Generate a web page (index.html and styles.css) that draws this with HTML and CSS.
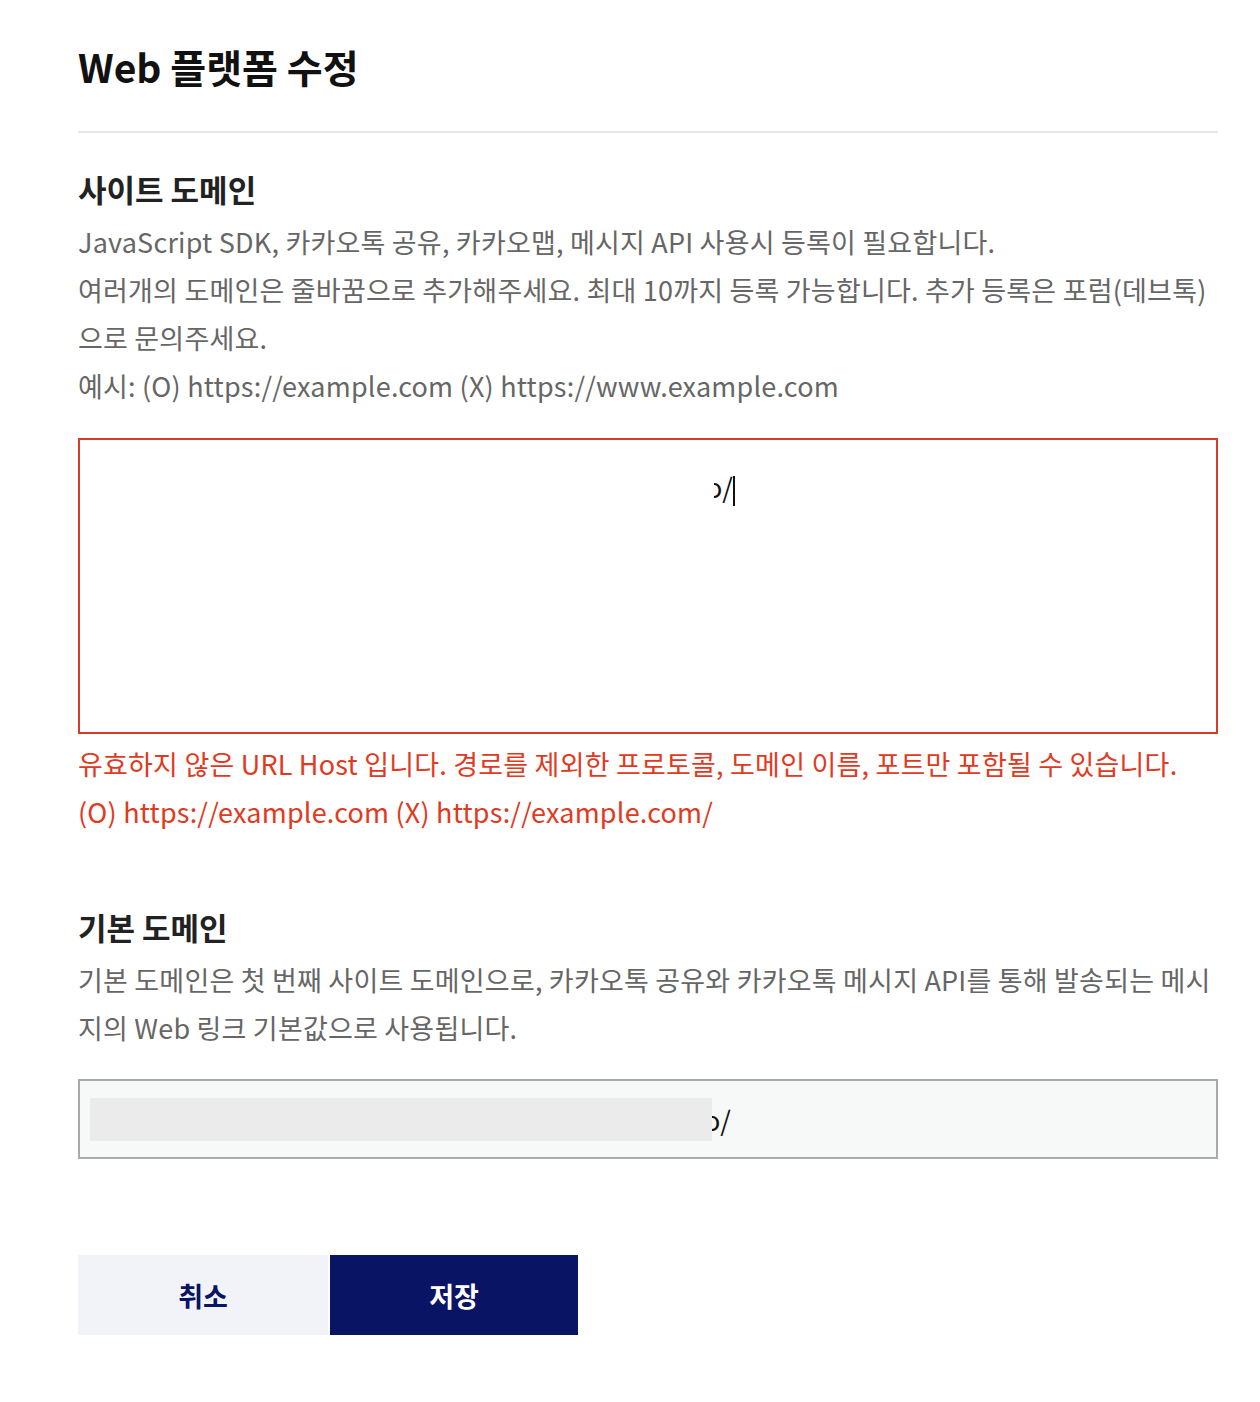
FILE: index.html
```html
<!DOCTYPE html>
<html>
  <head>
    <title>Web 플랫폼 수정</title>
    <link rel="stylesheet" href="styles.css">
  </head>
  <body>
    <div class="container">
      <h1 class="page-title">Web 플랫폼 수정</h1>

      <form id="platformForm">
        <div class="section">
          <h2>사이트 도메인</h2>
          <p class="desc">
            JavaScript SDK, 카카오톡 공유, 카카오맵, 메시지 API 사용시 등록이 필요합니다.<br />
            여러개의 도메인은 줄바꿈으로 추가해주세요. 최대 10까지 등록 가능합니다. 추가 등록은 포럼(데브톡)으로 문의주세요.<br />
            예시: (O) https://example.com (X) https://www.example.com
          </p>
          <div class="domain-box is-error">
            <span class="mask"></span><span class="tail">o/</span><span class="caret"></span>
          </div>
          <p class="error-message">
            유효하지 않은 URL Host 입니다. 경로를 제외한 프로토콜, 도메인 이름, 포트만 포함될 수 있습니다.<br />
            (O) https://example.com (X) https://example.com/
          </p>
        </div>

        <div class="section section-default">
          <h2>기본 도메인</h2>
          <p class="desc">
            기본 도메인은 첫 번째 사이트 도메인으로, 카카오톡 공유와 카카오톡 메시지 API를 통해 발송되는 메시지의 Web 링크 기본값으로 사용됩니다.
          </p>
          <div class="default-input">
            <span class="mask mask-gray"></span><span class="tail">o/</span>
          </div>
        </div>

        <div class="actions">
          <button type="button" class="btn btn-cancel">취소</button>
          <button type="submit" class="btn btn-save">저장</button>
        </div>
      </form>
    </div>
  </body>
</html>
```

FILE: styles.css
```css
body {
  margin: 0;
  font-family: "Noto Sans CJK KR", "Noto Sans", sans-serif;
  color: #222;
  background: #fff;
}
.container {
  width: 1140px;
  padding: 38px 0 60px 78px;
}
.page-title {
  margin: 0;
  font-size: 39px;
  font-weight: 700;
  line-height: 56px;
  color: #111;
  padding-bottom: 37px;
  border-bottom: 2px solid #e6e6e6;
}
.section {
  padding-top: 36px;
}
.section h2 {
  margin: 0;
  font-size: 31px;
  font-weight: 700;
  line-height: 40px;
  color: #222;
}
.desc {
  margin: 9px 0 0;
  font-size: 27px;
  line-height: 48px;
  letter-spacing: 0.2px;
  color: #666;
}
.domain-box {
  margin-top: 28px;
  height: 296px;
  box-sizing: border-box;
  border: 2px solid #ccc;
  padding: 27px 20px 20px 20px;
  font-size: 27px;
  line-height: 40px;
  color: #111;
}
.domain-box.is-error {
  border-color: #d93b2b;
}
.mask {
  position: relative;
  z-index: 1;
  display: inline-block;
  width: 614px;
  height: 30px;
  vertical-align: middle;
  background: #fff;
}
.tail {
  display: inline-block;
  margin-left: -8px;
}
.caret {
  display: inline-block;
  width: 2px;
  height: 30px;
  vertical-align: middle;
  background: #111;
}
.error-message {
  margin: 6px 0 0;
  font-size: 27px;
  line-height: 48px;
  letter-spacing: 0.2px;
  color: #e03a22;
}
.section-default {
  padding-top: 71px;
}
.default-input {
  margin-top: 27px;
  height: 80px;
  box-sizing: border-box;
  border: 2px solid #aaa;
  background: #f7f8f8;
  padding: 0 10px;
  display: flex;
  align-items: center;
  font-size: 27px;
  color: #111;
}
.mask-gray {
  width: 622px;
  height: 43px;
  background: #ebebeb;
}
.actions {
  margin-top: 96px;
  display: flex;
  gap: 2px;
}
.btn {
  height: 80px;
  border: none;
  font-family: inherit;
  font-size: 27px;
  font-weight: 700;
  cursor: pointer;
}
.btn-cancel {
  width: 250px;
  background: #f2f3f8;
  color: #0a1464;
}
.btn-save {
  width: 248px;
  background: #0a1464;
  color: #fff;
}
```
